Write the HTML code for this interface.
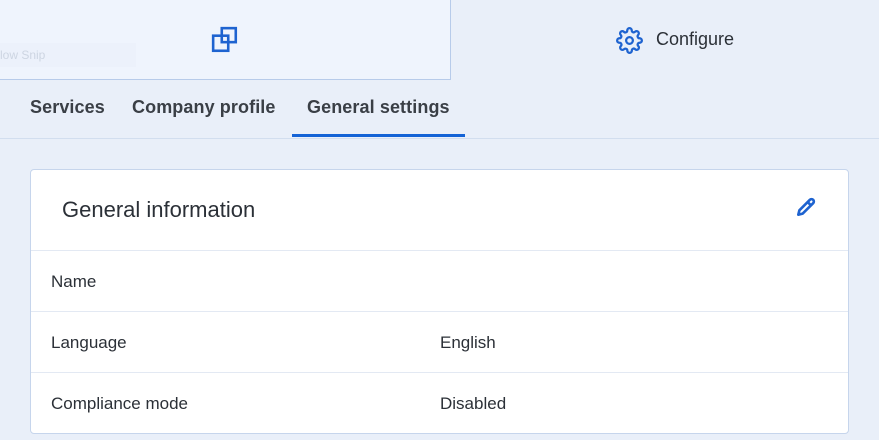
<!DOCTYPE html><html><head><style>
body{margin:0;width:879px;height:440px;background:#e9eff9;font-family:"Liberation Sans",sans-serif;position:relative;overflow:hidden;color:#2b3037}
.tp{position:absolute;left:0;top:0;width:450px;height:79px;background:#eff4fd;border-right:1px solid #b7cbea;border-bottom:1px solid #b7cbea}
.snip{position:absolute;left:0;top:43px;width:136px;height:24px;background:#ecf1fb;color:#cdd5e2;font-size:12px;line-height:24px}
.tab{position:absolute;top:97px;font-size:18px;font-weight:bold;color:#3a3f46;letter-spacing:0.1px}
.sep{position:absolute;left:0;top:138px;width:879px;height:1px;background:#d2deef}
.ul{position:absolute;left:292px;top:134px;width:173px;height:3px;background:#1463d6}
.card{position:absolute;left:30px;top:169px;width:817px;height:263px;background:#fff;border:1px solid #c6d5ec;border-radius:4px}
.row{position:absolute;left:0;width:817px;height:61px;border-top:1px solid #e3e9f3;font-size:17px;line-height:61px}
.row span{position:absolute}
</style></head><body>
<div class="tp"><div class="snip">low Snip</div>
<svg style="position:absolute;left:211px;top:26px" width="28" height="28" viewBox="0 0 26 26" fill="none" stroke="#1e63d0" stroke-width="2.4"><rect x="2" y="9" width="14" height="14"/><rect x="10" y="2" width="13" height="13"/></svg></div>
<svg style="position:absolute;left:616px;top:27px" width="27" height="27" viewBox="0 0 24 24" fill="none" stroke="#1e63d0" stroke-width="2"><circle cx="12" cy="12" r="3"/><path d="M19.4 15a1.65 1.65 0 0 0 .33 1.820l.06.06a2 2 0 1 1-2.83 2.83l-.06-.06a1.650 1.650 0 0 0-1.82-.33 1.65 1.65 0 0 0-1 1.51V21a2 2 0 1 1-4 0v-.09A1.65 1.65 0 0 0 9 19.4a1.65 1.65 0 0 0-1.82.33l-.06.06a2 2 0 1 1-2.830-2.83l.06-.06A1.65 1.65 0 0 0 4.68 15a1.65 1.65 0 0 0-1.51-1H3a2 2 0 1 1 0-4h.09A1.65 1.65 0 0 0 4.6 9a1.65 1.65 0 0 0-.33-1.82l-.06-.06a2 2 0 1 1 2.83-2.83l.06.06A1.65 1.65 0 0 0 9 4.68 1.65 1.65 0 0 0 10 3.17V3a2 2 0 1 1 4 0v.09a1.65 1.65 0 0 0 1 1.51 1.65 1.65 0 0 0 1.82-.33l.06-.06a2 2 0 1 1 2.83 2.83l-.06.06A1.65 1.65 0 0 0 19.4 9a1.65 1.65 0 0 0 1.51 1H21a2 2 0 1 1 0 4h-.09a1.65 1.65 0 0 0-1.51 1z"/></svg>
<div style="position:absolute;left:656px;top:29px;font-size:18px;color:#2b3037">Configure</div>
<div class="tab" style="left:30px">Services</div>
<div class="tab" style="left:132px">Company profile</div>
<div class="tab" style="left:307px">General settings</div>
<div class="sep"></div><div class="ul"></div>
<div class="card">
<div style="position:absolute;left:31px;top:27px;font-size:22px;color:#2b3037">General information</div>
<svg style="position:absolute;left:764px;top:26px" width="22" height="22" viewBox="0 0 20 20" fill="none" stroke="#1e63d0" stroke-width="2.4" stroke-linejoin="round"><path d="M3 17l1-4L13.5 3.5a2 2 0 0 1 3 3L7 16z M11.5 5.5l3 3"/></svg>
<div class="row" style="top:80px"><span style="left:20px">Name</span></div>
<div class="row" style="top:141px"><span style="left:20px">Language</span><span style="left:409px">English</span></div>
<div class="row" style="top:202px"><span style="left:20px">Compliance mode</span><span style="left:409px">Disabled</span></div>
</div>
</body></html>
